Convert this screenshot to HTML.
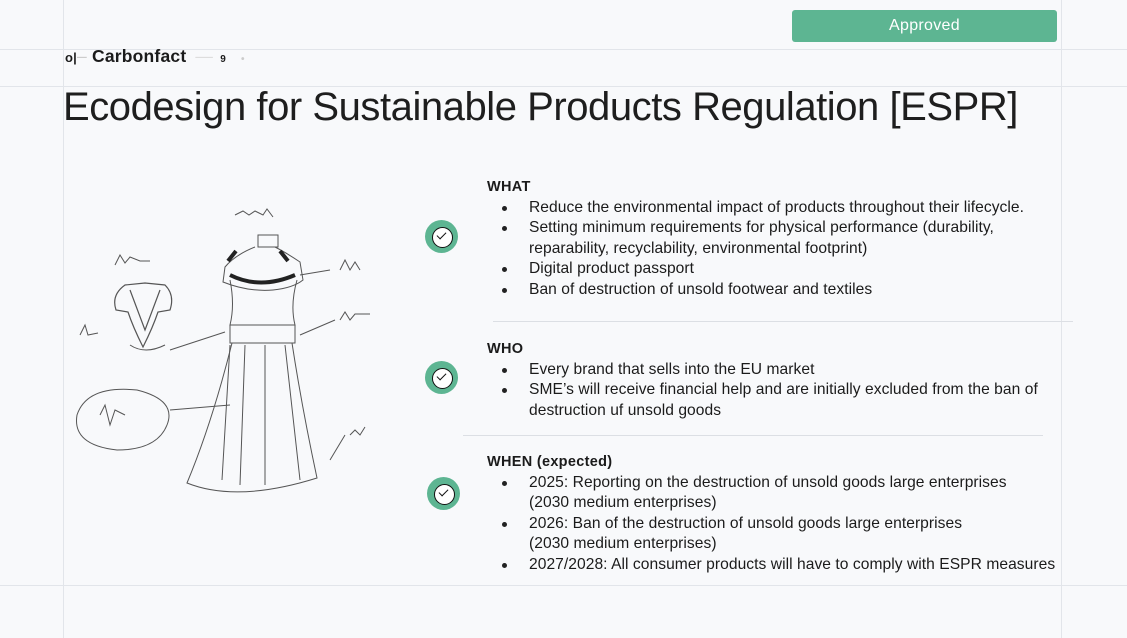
<!DOCTYPE html>
<html><head><meta charset="utf-8"><style>
*{margin:0;padding:0;box-sizing:border-box}
body{width:1127px;height:638px;background:#f8f9fb;font-family:"Liberation Sans",sans-serif;color:#1b1b1b;position:relative;overflow:hidden}
.h{position:absolute;left:0;width:1127px;height:1px;background:#e2e5ea}
.v{position:absolute;top:0;height:638px;width:1px;background:#e2e5ea}
.btn{position:absolute;left:792px;top:10px;width:265px;height:32px;background:#5db592;border-radius:3px;color:#fff;font-size:16px;text-align:center;line-height:32px;letter-spacing:0.3px}
.logo{position:absolute;left:65px;top:46px;font-size:17.5px;font-weight:bold;letter-spacing:0.2px}
.title{position:absolute;left:63px;top:85px;font-size:40px;white-space:nowrap;letter-spacing:-0.45px;color:#1e1e1e}
.sec{position:absolute;left:487px;font-size:15.6px;line-height:20.5px;letter-spacing:0.05px}
.sec b{display:block;font-size:14.5px;letter-spacing:0.3px}
.sec ul{list-style:none}
.sec li{position:relative;padding-left:42px;white-space:nowrap}
.sec li:before{content:"";position:absolute;left:15px;top:8px;width:5px;height:5px;border-radius:50%;background:#222}
.chk{position:absolute;width:33px;height:33px;border-radius:50%;background:#5db592}
.chk:after{content:"";position:absolute;left:7px;top:7px;width:19px;height:19px;border:1.5px solid #111;border-radius:50%;background:#fff}
.chk i{position:absolute;left:12px;top:12px;width:9px;height:5px;border-left:1.8px solid #111;border-bottom:1.8px solid #111;transform:rotate(-45deg);z-index:2}
.sep{position:absolute;height:1px;background:#dcdfe4}
</style></head><body>
<div class="h" style="top:49px"></div><div class="h" style="top:86px"></div><div class="h" style="top:585px"></div>
<div class="v" style="left:63px"></div><div class="v" style="left:1061px"></div>
<div class="btn">Approved</div>
<div class="logo"><span style="font-size:13px">o|</span><span style="color:#ccc;font-weight:normal">–</span>&nbsp;Carbonfact <span style="color:#ddd;font-weight:normal;margin-left:4px">—</span> <span style="font-size:10px;margin-left:2px">9</span> <span style="color:#ccc;font-size:10px;margin-left:10px">•</span></div>
<div class="title">Ecodesign for Sustainable Products Regulation [ESPR]</div>

<svg style="position:absolute;left:70px;top:195px" width="320" height="310" fill="none" stroke="#555" stroke-width="1">
<path d="M165 20 l8-4 6 4 6-4 8 4 4-6 6 8"/>
<path d="M188 40 h20 v12 h-20z M185 52 q-20 8 -30 20 l-2 15 q25 10 50 8 q20 -2 30 -10 l-3-18 q-15 -10 -25 -15"/>
<path d="M158 66 l8-10 M218 66 l-8-10 M160 80 q30 15 65 0" stroke="#222" stroke-width="4"/>
<path d="M160 85 q5 25 0 45 h65 q-5 -20 2 -45 M160 130 v18 h65 v-18"/>
<path d="M162 148 q-20 80 -45 140 q50 20 130 -5 q-15 -70 -25 -135"/>
<path d="M160 150 l-8 135 M175 150 l-5 140 M195 150 v140 M215 150 l15 135"/>
<path d="M55 90 l20 -2 20 2 q10 10 5 25 l-12 2 q-5 15 -15 35 q-10 -20 -15 -35 l-12 -2 q-5 -15 9 -25z M60 95 l15 40 15 -40" stroke-width="1.2"/>
<path d="M60 150 q15 10 35 0"/>
<path d="M45 70 l5-10 5 8 5-6 10 4 10 0 M10 140 l5-10 3 10 10 -2"/>
<path d="M7 220 q10 -30 60 -25 q40 10 30 35 q-10 25 -50 25 q-45 -5 -40 -35z M30 220 l5-10 5 20 5-15 10 5 M100 215 l60 -5"/>
<path d="M100 155 l55 -18 M230 140 l35 -15 M230 80 l30 -5 M270 75 l5-10 5 10 5-8 5 8 M270 125 l5-8 5 8 5-6 15 0 M260 265 l15 -25 M280 240 l5-5 5 5 5-8"/>
</svg>

<div class="chk" style="left:425px;top:220px"><i></i></div>
<div class="chk" style="left:425px;top:361px"><i></i></div>
<div class="chk" style="left:427px;top:477px"><i></i></div>

<div class="sec" style="top:177px"><b>WHAT</b><ul>
<li>Reduce the environmental impact of products throughout their lifecycle.</li>
<li>Setting minimum requirements for physical performance (durability,<br>reparability, recyclability, environmental footprint)</li>
<li>Digital product passport</li>
<li>Ban of destruction of unsold footwear and textiles</li></ul></div>
<div class="sep" style="left:493px;top:321px;width:580px"></div>
<div class="sec" style="top:339px"><b>WHO</b><ul>
<li>Every brand that sells into the EU market</li>
<li>SME’s will receive financial help and are initially excluded from the ban of<br>destruction uf unsold goods</li></ul></div>
<div class="sep" style="left:463px;top:435px;width:580px"></div>
<div class="sec" style="top:452px"><b>WHEN (expected)</b><ul>
<li>2025: Reporting on the destruction of unsold goods large enterprises<br>(2030 medium enterprises)</li>
<li>2026: Ban of the destruction of unsold goods large enterprises<br>(2030 medium enterprises)</li>
<li>2027/2028: All consumer products will have to comply with ESPR measures</li></ul></div>
</body></html>
